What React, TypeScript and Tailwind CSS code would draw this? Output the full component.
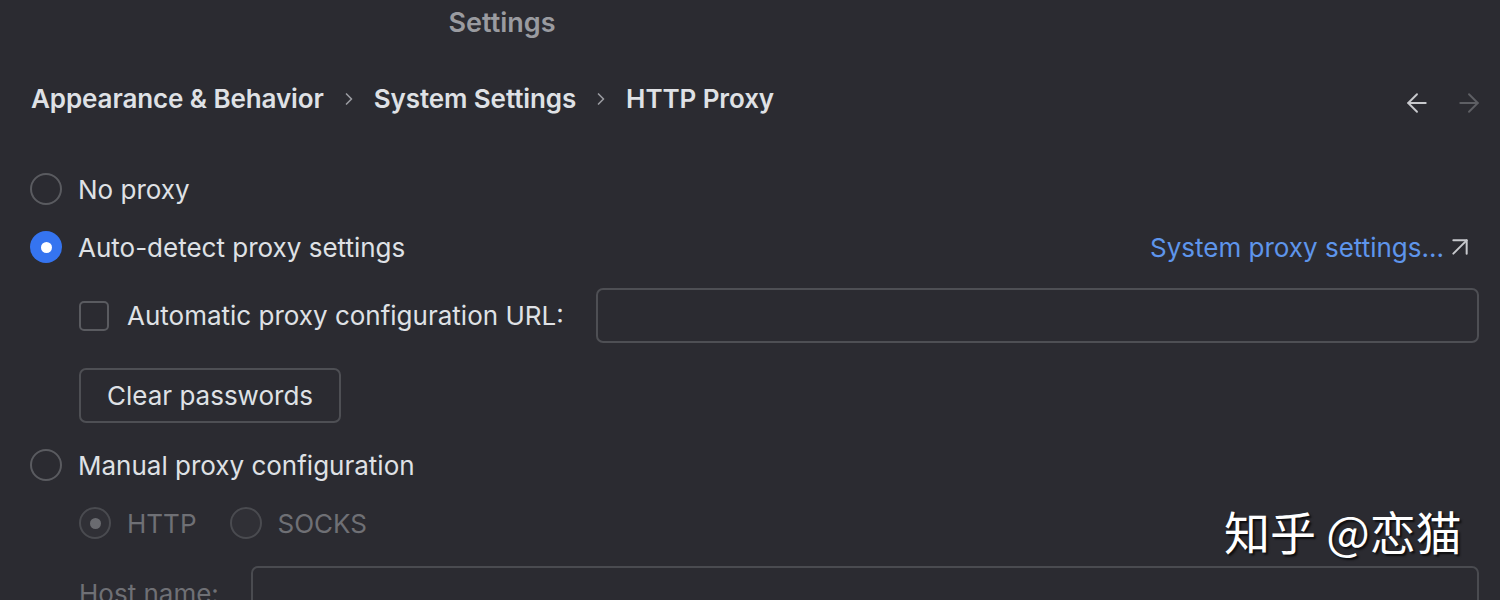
import { ArrowLeft, ArrowRight, ArrowUpRight, ChevronRight } from 'lucide-react';

const font = { fontFamily: 'Inter, "Noto Sans CJK SC", sans-serif' };

function Radio({ checked, disabled }: { checked?: boolean; disabled?: boolean }) {
  if (checked && !disabled) {
    return (
      <span className="flex h-[32px] w-[32px] shrink-0 items-center justify-center rounded-full bg-[#3574f0]">
        <span className="h-[11px] w-[11px] rounded-full bg-white" />
      </span>
    );
  }
  return (
    <span
      className={
        'flex h-[32px] w-[32px] shrink-0 items-center justify-center rounded-full border-2 ' +
        (disabled ? 'border-[#4a4b50] bg-[#303036]' : 'border-[#5a5b60]')
      }
    >
      {checked && <span className="h-[11px] w-[11px] rounded-full bg-[#6a6b70]" />}
    </span>
  );
}

export default function App() {
  return (
    <div className="h-[600px] w-[1500px] overflow-hidden bg-[#2b2b31] text-[#dfe1e5]" style={font}>
      <div className="relative">
        {/* title */}
        <div className="flex h-[46px] w-[1004px] items-center justify-center text-[27px] font-semibold text-[#9a9ba0]">
          Settings
        </div>

        {/* breadcrumb */}
        <div className="mt-[33px] flex items-center pl-[31px] pr-[16px]">
          <div className="flex items-center text-[26px] font-semibold tracking-[-0.1px]">
            <span>Appearance &amp; Behavior</span>
            <ChevronRight className="mx-[15px] h-[20px] w-[20px] text-[#9a9ba0]" strokeWidth={2} />
            <span>System Settings</span>
            <ChevronRight className="mx-[15px] h-[20px] w-[20px] text-[#9a9ba0]" strokeWidth={2} />
            <span>HTTP Proxy</span>
          </div>
          <div className="ml-auto mt-[8px] flex items-center gap-[22px]">
            <ArrowLeft className="h-[30px] w-[30px] text-[#c8c9cd]" strokeWidth={1.5} />
            <ArrowRight className="h-[30px] w-[30px] text-[#5e5f64]" strokeWidth={1.5} />
          </div>
        </div>

        {/* options */}
        <div className="mt-[51px] flex flex-col pl-[30px] pr-[21px] text-[26px]">
          <div className="flex h-[40px] items-center gap-[16px]">
            <Radio />
            <span>No proxy</span>
          </div>

          <div className="mt-[18px] flex h-[40px] items-center gap-[16px]">
            <Radio checked />
            <span>Auto-detect proxy settings</span>
            <span className="ml-auto mr-[3px] flex items-center text-[#5e95eb]">
              System proxy settings...
              <ArrowUpRight className="h-[32px] w-[32px] text-[#c8c9cd]" strokeWidth={1.5} />
            </span>
          </div>

          <div className="mt-[21px] flex items-center pl-[49px]">
            <span className="h-[30px] w-[30px] shrink-0 rounded-[5px] border-2 border-[#5a5b60]" />
            <span className="ml-[18px]">Automatic proxy configuration URL:</span>
            <div className="ml-[32px] h-[55px] flex-1 rounded-[7px] border-2 border-[#4e4f54]" />
          </div>

          <div className="mt-[25px] pl-[49px]">
            <button className="h-[55px] rounded-[7px] border-2 border-[#4e4f54] px-[26px] text-[26px] text-[#dfe1e5]">
              Clear passwords
            </button>
          </div>

          <div className="mt-[22px] flex h-[40px] items-center gap-[16px]">
            <Radio />
            <span>Manual proxy configuration</span>
          </div>

          <div className="mt-[18px] flex h-[40px] items-center pl-[49px] text-[#6f7075]">
            <Radio checked disabled />
            <span className="ml-[16px]">HTTP</span>
            <span className="ml-[33px]">
              <Radio disabled />
            </span>
            <span className="ml-[16px]">SOCKS</span>
          </div>

          <div className="mt-[23px] flex items-start pl-[49px] text-[#6f7075]">
            <span className="mt-[8px]">Host name:</span>
            <div className="ml-[32px] h-[55px] flex-1 rounded-[7px] border-2 border-[#4a4b50]" />
          </div>
        </div>

        {/* watermark */}
        <div
          className="absolute left-[1224px] top-[507px] text-[46px] leading-none text-white"
          style={{ fontFamily: '"Noto Sans CJK SC", sans-serif', textShadow: '2px 2px 2px rgba(0,0,0,0.7)' }}
        >
          知乎 @恋猫
        </div>
      </div>
    </div>
  );
}
